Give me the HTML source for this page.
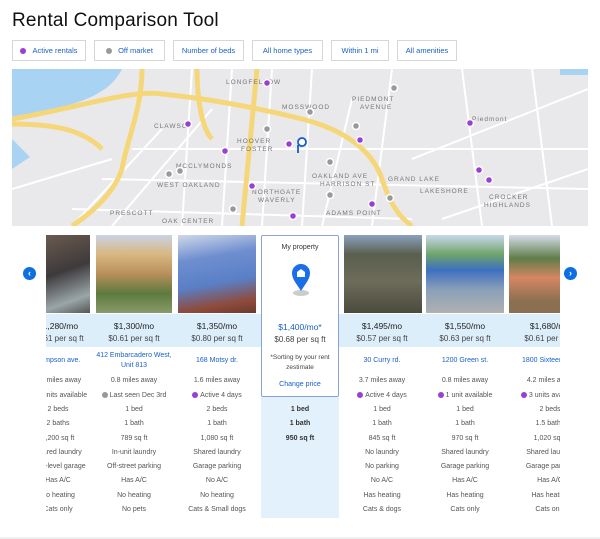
<!DOCTYPE html>
<html><head><meta charset="utf-8">
<style>
*{margin:0;padding:0;box-sizing:border-box}
body{width:600px;height:539px;background:#fff;font-family:"Liberation Sans",sans-serif;position:relative;overflow:hidden;color:#333}
h1{position:absolute;left:12px;top:10px;font-size:19px;font-weight:normal;color:#111;letter-spacing:.2px}
.btn{position:absolute;top:40px;height:21px;border:1px solid #d6d6d6;font-size:7.5px;color:#1a5fc9;display:flex;align-items:center;justify-content:center;background:#fff}
.btn i{display:inline-block;width:6px;height:6px;border-radius:50%;margin-right:6px}
.map{position:absolute;left:12px;top:69px;width:576px;height:157px;overflow:hidden}
.band{position:absolute;left:46px;top:314px;width:514px;height:33px;background:#ddeefb}
.img{position:absolute;top:235px;height:78px}
.cols{position:absolute;left:46px;top:0;width:514px;height:539px;overflow:hidden}
.col{position:absolute;top:0;width:84px;text-align:center;font-size:7px;color:#555}
.col div{position:absolute;left:-10px;width:104px;white-space:nowrap}
.pr{font-size:8.5px;color:#222}
.psf{font-size:8px;color:#444}
.ad{color:#1a5fc9;font-size:7px}
.dot{display:inline-block;width:6px;height:6px;border-radius:50%;vertical-align:-1px;margin-right:2px}
.card{position:absolute;left:261px;top:235px;width:78px;height:162px;border:1.5px solid #8aa2d8;background:#fff;text-align:center;border-radius:2px}
.hl{position:absolute;left:261px;top:396px;width:78px;height:122px;background:#e3f1fd}
.arrow{position:absolute;top:267px;width:13px;height:13px;border-radius:50%;background:#0d6fe0;color:#fff;font-size:9px;line-height:13px;text-align:center;font-weight:bold}
</style></head><body>
<h1>Rental Comparison Tool</h1>
<div class="btn" style="left:12px;width:74px"><i style="background:#9b3fd4"></i>Active rentals</div>
<div class="btn" style="left:94px;width:71px"><i style="background:#999"></i>Off market</div>
<div class="btn" style="left:173px;width:71px">Number of beds</div>
<div class="btn" style="left:252px;width:71px">All home types</div>
<div class="btn" style="left:331px;width:58px">Within 1 mi</div>
<div class="btn" style="left:397px;width:60px">All amenities</div>

<div class="map">
<svg width="576" height="157" viewBox="0 0 576 157">
<rect width="576" height="157" fill="#e9e9eb"/>
<path d="M0 0 H110 C100 20 80 30 50 38 C30 44 10 50 0 52 Z" fill="#a9d3f3"/>
<path d="M0 70 L0 100 L18 88 Z" fill="#a9d3f3"/>
<rect x="548" y="0" width="28" height="6" fill="#a9d3f3"/>
<g stroke="#fff" stroke-width="2" fill="none">
<path d="M60 157 L150 60 M100 157 L200 40 M180 0 L170 157 M220 0 L210 157 M260 0 L250 157 M300 0 L290 157 M340 30 L310 157 M120 80 L576 80 M90 110 L576 120 M60 140 L400 150 M380 0 L360 157 M400 90 L576 20 M450 0 L470 157 M520 0 L540 157 M430 150 L576 100 M0 120 L100 90"/>
</g>
<g stroke="#f5d77a" stroke-width="5" fill="none">
<path d="M0 50 C60 40 120 20 150 25 C200 30 250 40 290 50 C330 60 360 80 370 110 C380 140 390 150 400 157"/>
<path d="M0 55 C40 55 70 60 90 80"/>
<path d="M130 0 C130 40 115 70 110 100 C100 130 70 150 60 157"/>
<path d="M245 0 L230 157"/>
<path d="M185 0 C185 30 190 60 200 70"/>
</g>
<g font-family="Liberation Sans" font-size="6.5" fill="#777" letter-spacing="1">
<text x="214" y="15">LONGFELLOW</text><text x="270" y="40">MOSSWOOD</text><text x="340" y="32">PIEDMONT</text><text x="348" y="40">AVENUE</text>
<text x="142" y="59">CLAWSO</text><text x="225" y="74">HOOVER</text><text x="229" y="82">FOSTER</text><text x="164" y="99">MCCLYMONDS</text>
<text x="145" y="118">WEST OAKLAND</text><text x="300" y="109">OAKLAND AVE</text><text x="308" y="117">HARRISON ST</text><text x="376" y="112">GRAND LAKE</text>
<text x="240" y="125">NORTHGATE</text><text x="246" y="133">WAVERLY</text><text x="408" y="124">LAKESHORE</text><text x="477" y="130">CROCKER</text><text x="472" y="138">HIGHLANDS</text>
<text x="98" y="146">PRESCOTT</text><text x="150" y="154">OAK CENTER</text><text x="314" y="146">ADAMS POINT</text><text x="460" y="52">Piedmont</text>
</g>
<g fill="#9b3fd4" stroke="#fff" stroke-width="1.5">
<circle cx="255" cy="14" r="3.5"/><circle cx="176" cy="55" r="3.5"/><circle cx="277" cy="75" r="3.5"/><circle cx="213" cy="82" r="3.5"/><circle cx="348" cy="71" r="3.5"/><circle cx="458" cy="54" r="3.5"/><circle cx="467" cy="101" r="3.5"/><circle cx="477" cy="111" r="3.5"/><circle cx="240" cy="117" r="3.5"/><circle cx="360" cy="135" r="3.5"/><circle cx="281" cy="147" r="3.5"/>
</g>
<g fill="#999" stroke="#fff" stroke-width="1.5">
<circle cx="382" cy="19" r="3.5"/><circle cx="298" cy="43" r="3.5"/><circle cx="255" cy="60" r="3.5"/><circle cx="344" cy="57" r="3.5"/><circle cx="318" cy="93" r="3.5"/><circle cx="157" cy="105" r="3.5"/><circle cx="168" cy="102" r="3.5"/><circle cx="318" cy="126" r="3.5"/><circle cx="378" cy="129" r="3.5"/><circle cx="221" cy="140" r="3.5"/>
</g>
<path d="M286 73 a4 4 0 1 1 0 .1 M286 76 L286 84" stroke="#1a5fc9" stroke-width="1.8" fill="#fff"/>
</svg>
</div>

<div class="band"></div>
<div class="img" style="left:46px;width:44px;background:linear-gradient(160deg,#6b5a4e,#3e3a3c 45%,#9aa6a8 80%,#555)"></div>
<div class="img" style="left:96px;width:76px;background:linear-gradient(180deg,#c9d3e6 0,#d9b781 25%,#b88f5a 50%,#5d7a3e 75%,#8a9a6a)"></div>
<div class="img" style="left:178px;width:78px;background:linear-gradient(170deg,#cfd8e8 0,#6f8ed0 30%,#5a7fc6 60%,#8f4a3a 85%,#6a3a30)"></div>
<div class="img" style="left:344px;width:78px;background:linear-gradient(180deg,#8aa1be 0,#5a5f4e 25%,#6d6c5a 60%,#4a4a3e 100%)"></div>
<div class="img" style="left:426px;width:78px;background:linear-gradient(180deg,#c9d8ea 0,#6ea46a 25%,#3e6fc2 45%,#8aa0b8 70%,#b0b0b0)"></div>
<div class="img" style="left:509px;width:51px;background:linear-gradient(180deg,#d5dde8 0,#5f7d49 30%,#d58664 55%,#8a7050 85%)"></div>

<div class="hl"></div>
<div class="cols">
<div class="col" style="left:-30px">
<div class="pr" style="top:321px">$1,280/mo</div><div class="psf" style="top:334px">$0.61 per sq ft</div>
<div class="ad" style="top:357px">Sampson ave.</div><div style="top:377px">0.6 miles away</div><div style="top:392px"><span class="dot" style="background:#9b3fd4"></span>2 units available</div>
<div style="top:406px">2 beds</div><div style="top:420px">2 baths</div><div style="top:435px">1,200 sq ft</div><div style="top:449px">Shared laundry</div><div style="top:463px">Multi-level garage</div><div style="top:477px">Has A/C</div><div style="top:492px">No heating</div><div style="top:506px">Cats only</div>
</div>
<div class="col" style="left:46px">
<div class="pr" style="top:321px">$1,300/mo</div><div class="psf" style="top:334px">$0.61 per sq ft</div>
<div class="ad" style="top:352px">412 Embarcadero West,</div><div class="ad" style="top:362px">Unit 813</div><div style="top:377px">0.8 miles away</div><div style="top:392px"><span class="dot" style="background:#999"></span>Last seen Dec 3rd</div>
<div style="top:406px">1 bed</div><div style="top:420px">1 bath</div><div style="top:435px">789 sq ft</div><div style="top:449px">In-unit laundry</div><div style="top:463px">Off-street parking</div><div style="top:477px">Has A/C</div><div style="top:492px">No heating</div><div style="top:506px">No pets</div>
</div>
<div class="col" style="left:129px">
<div class="pr" style="top:321px">$1,350/mo</div><div class="psf" style="top:334px">$0.80 per sq ft</div>
<div class="ad" style="top:357px">168 Motsy dr.</div><div style="top:377px">1.6 miles away</div><div style="top:392px"><span class="dot" style="background:#9b3fd4"></span>Active 4 days</div>
<div style="top:406px">2 beds</div><div style="top:420px">1 bath</div><div style="top:435px">1,080 sq ft</div><div style="top:449px">Shared laundry</div><div style="top:463px">Garage parking</div><div style="top:477px">No A/C</div><div style="top:492px">No heating</div><div style="top:506px">Cats &amp; Small dogs</div>
</div>
<div class="col" style="left:294px">
<div class="pr" style="top:321px">$1,495/mo</div><div class="psf" style="top:334px">$0.57 per sq ft</div>
<div class="ad" style="top:357px">30 Curry rd.</div><div style="top:377px">3.7 miles away</div><div style="top:392px"><span class="dot" style="background:#9b3fd4"></span>Active 4 days</div>
<div style="top:406px">1 bed</div><div style="top:420px">1 bath</div><div style="top:435px">845 sq ft</div><div style="top:449px">No laundry</div><div style="top:463px">No parking</div><div style="top:477px">No A/C</div><div style="top:492px">Has heating</div><div style="top:506px">Cats &amp; dogs</div>
</div>
<div class="col" style="left:377px">
<div class="pr" style="top:321px">$1,550/mo</div><div class="psf" style="top:334px">$0.63 per sq ft</div>
<div class="ad" style="top:357px">1200 Green st.</div><div style="top:377px">0.8 miles away</div><div style="top:392px"><span class="dot" style="background:#9b3fd4"></span>1 unit available</div>
<div style="top:406px">1 bed</div><div style="top:420px">1 bath</div><div style="top:435px">970 sq ft</div><div style="top:449px">Shared laundry</div><div style="top:463px">Garage parking</div><div style="top:477px">Has A/C</div><div style="top:492px">Has heating</div><div style="top:506px">Cats only</div>
</div>
<div class="col" style="left:462px">
<div class="pr" style="top:321px">$1,680/mo</div><div class="psf" style="top:334px">$0.61 per sq ft</div>
<div class="ad" style="top:357px">1800 Sixteenth st.</div><div style="top:377px">4.2 miles away</div><div style="top:392px"><span class="dot" style="background:#9b3fd4"></span>3 units available</div>
<div style="top:406px">2 beds</div><div style="top:420px">1.5 baths</div><div style="top:435px">1,020 sq ft</div><div style="top:449px">Shared laundry</div><div style="top:463px">Garage parking</div><div style="top:477px">Has A/C</div><div style="top:492px">Has heating</div><div style="top:506px">Cats only</div>
</div>
</div>

<div class="card">
<div style="position:absolute;top:8px;width:100%;font-size:7px;color:#333">My property</div>
<svg style="position:absolute;left:26px;top:25px" width="26" height="36" viewBox="0 0 26 36">
<ellipse cx="13" cy="32" rx="8" ry="3" fill="#ccc"/>
<path d="M13 30 C8 22 4 18 4 12 A9 9 0 0 1 22 12 C22 18 18 22 13 30Z" fill="#1a6fe8"/>
<path d="M9 16 V11 L13 8 L17 11 V16 Z" fill="#fff"/>
</svg>
<div style="position:absolute;top:86px;width:100%;font-size:8.5px;color:#1a5fc9">$1,400/mo*</div>
<div style="position:absolute;top:99px;width:100%;font-size:8px;color:#444">$0.68 per sq ft</div>
<div style="position:absolute;top:117px;width:100%;font-size:6.5px;color:#444;line-height:10px">*Sorting by your rent<br>zestimate</div>
<div style="position:absolute;top:145px;width:100%;font-size:7px;color:#1a5fc9">Change price</div>
</div>
<div style="position:absolute;left:261px;width:78px;text-align:center;font-size:7px;font-weight:bold;color:#333">
<div style="position:absolute;top:406px;width:100%">1 bed</div><div style="position:absolute;top:420px;width:100%">1 bath</div><div style="position:absolute;top:435px;width:100%">950 sq ft</div>
</div>
<div class="arrow" style="left:23px">‹</div>
<div class="arrow" style="left:564px">›</div>
<div style="position:absolute;left:0;top:537px;width:600px;height:2px;background:#eee"></div>
</body></html>
